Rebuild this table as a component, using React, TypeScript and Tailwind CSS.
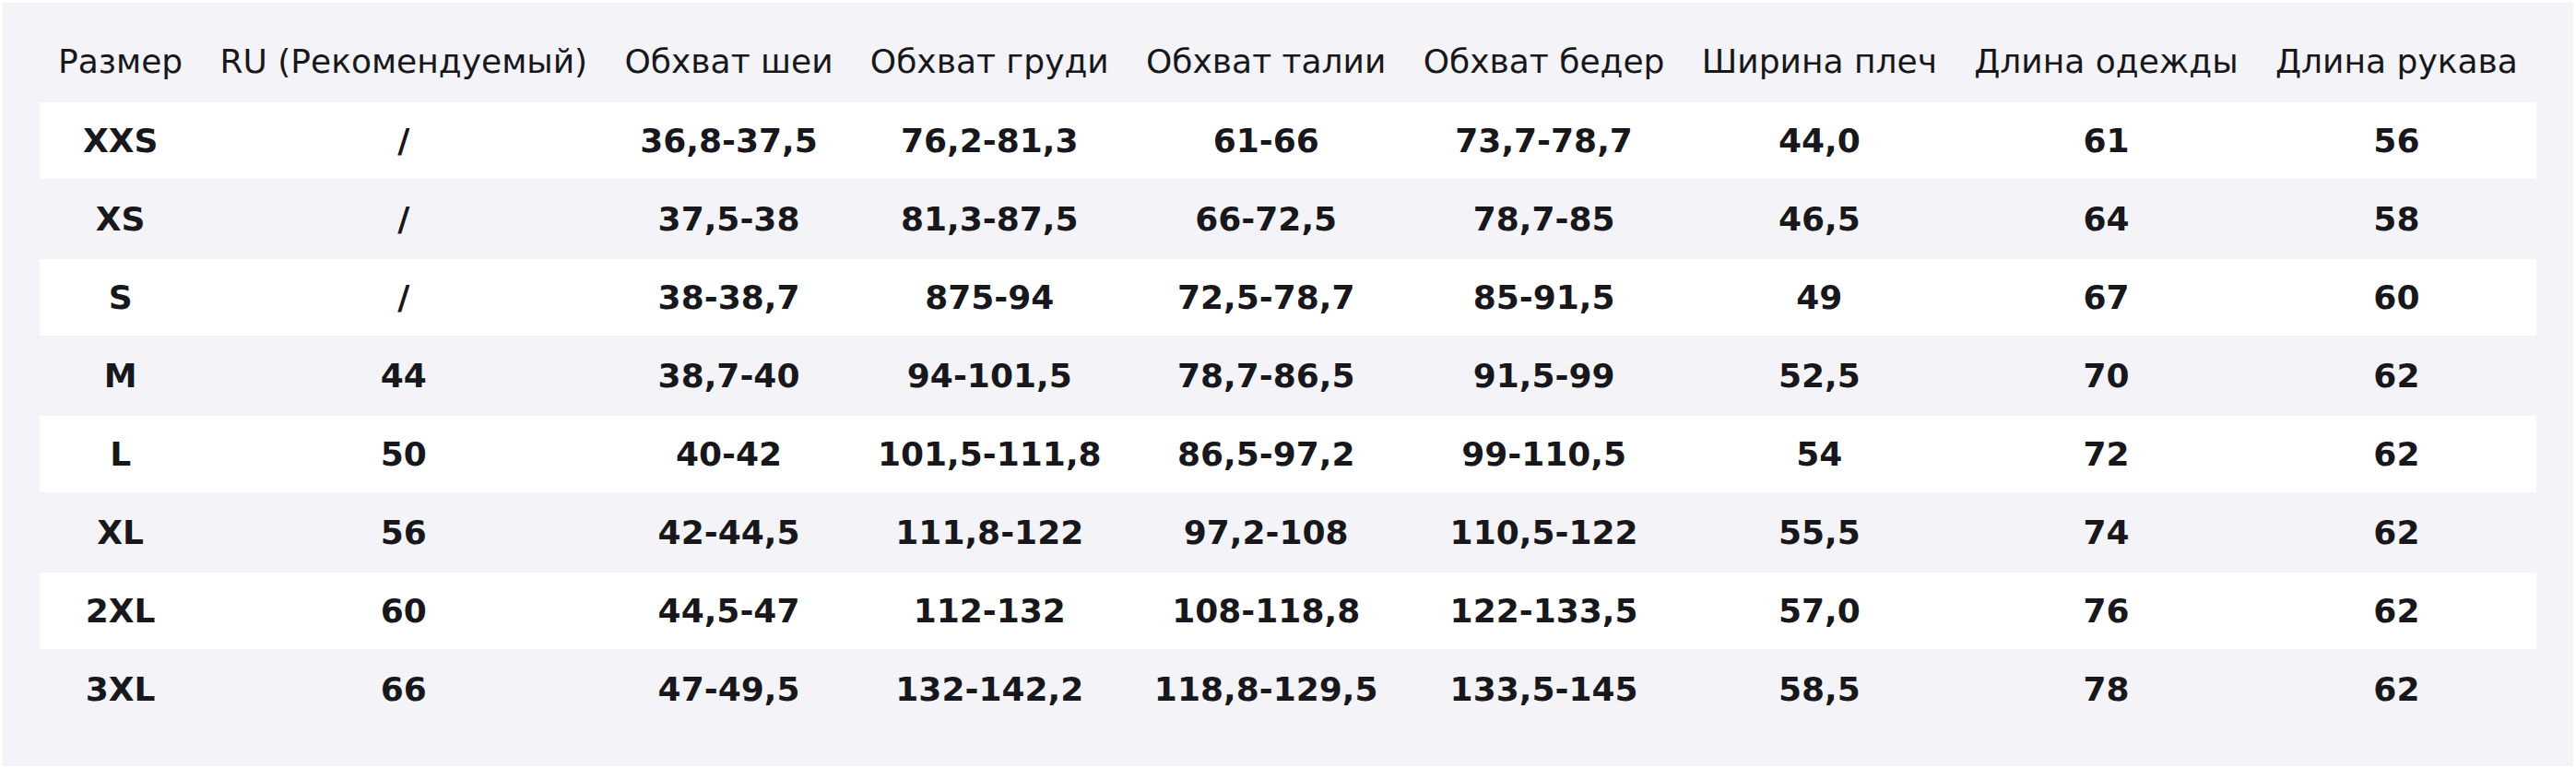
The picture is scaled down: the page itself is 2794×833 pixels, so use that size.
const headers = [
  'Размер',
  'RU (Рекомендуемый)',
  'Обхват шеи',
  'Обхват груди',
  'Обхват талии',
  'Обхват бедер',
  'Ширина плеч',
  'Длина одежды',
  'Длина рукава',
]

const rows = [
  ['XXS', '/', '36,8-37,5', '76,2-81,3', '61-66', '73,7-78,7', '44,0', '61', '56'],
  ['XS', '/', '37,5-38', '81,3-87,5', '66-72,5', '78,7-85', '46,5', '64', '58'],
  ['S', '/', '38-38,7', '875-94', '72,5-78,7', '85-91,5', '49', '67', '60'],
  ['M', '44', '38,7-40', '94-101,5', '78,7-86,5', '91,5-99', '52,5', '70', '62'],
  ['L', '50', '40-42', '101,5-111,8', '86,5-97,2', '99-110,5', '54', '72', '62'],
  ['XL', '56', '42-44,5', '111,8-122', '97,2-108', '110,5-122', '55,5', '74', '62'],
  ['2XL', '60', '44,5-47', '112-132', '108-118,8', '122-133,5', '57,0', '76', '62'],
  ['3XL', '66', '47-49,5', '132-142,2', '118,8-129,5', '133,5-145', '58,5', '78', '62'],
]

export default function App() {
  return (
    <div className="bg-white p-[3px] font-['DejaVu_Sans',sans-serif] text-[#17171c]">
      <div className="bg-[#f4f4f8] px-[40px] pt-[22px] pb-[40px]">
        <table className="w-full border-collapse text-[36px]">
          <thead>
            <tr className="h-[85px] border-b-2 border-[#f4f4f8]">
              {headers.map((h) => (
                <th key={h} className="px-[20px] text-center font-normal whitespace-nowrap">
                  {h}
                </th>
              ))}
            </tr>
          </thead>
          <tbody>
            {rows.map((r, i) => (
              <tr
                key={r[0]}
                className={`h-[85px] border-b-2 border-[#f4f4f8] ${i % 2 === 0 ? 'bg-white' : ''}`}
              >
                {r.map((c, j) => (
                  <td key={j} className="px-[20px] text-center font-bold whitespace-nowrap">
                    {c}
                  </td>
                ))}
              </tr>
            ))}
          </tbody>
        </table>
      </div>
    </div>
  )
}
